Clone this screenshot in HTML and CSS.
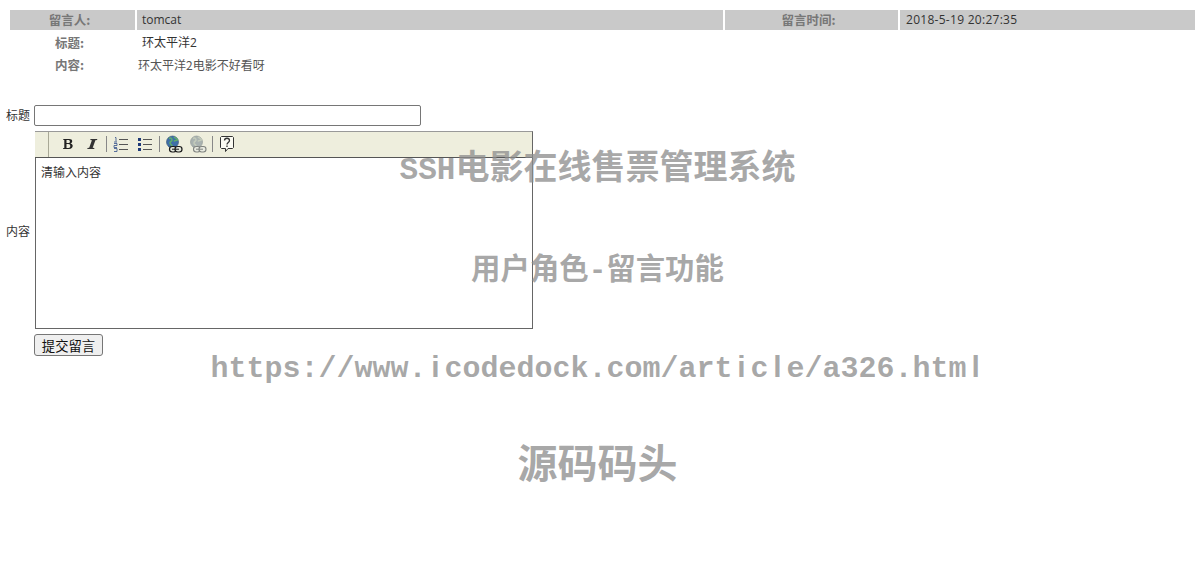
FILE: index.html
```html
<!DOCTYPE html>
<html lang="zh">
<head>
<meta charset="utf-8">
<title>留言</title>
<link rel="stylesheet" href="styles.css">
</head>
<body>
<table class="msg">
  <colgroup><col class="c1"><col class="c2"><col class="c3"><col class="c4"></colgroup>
  <tr class="head">
    <th>留言人:</th><td>tomcat</td><th>留言时间:</th><td class="date">2018-5-19 20:27:35</td>
  </tr>
  <tr>
    <th>标题:</th><td colspan="3">环太平洋2</td>
  </tr>
  <tr class="last">
    <th>内容:</th><td colspan="3" class="body-text">环太平洋2电影不好看呀</td>
  </tr>
</table>
<form class="reply">
  <div class="row title-row">
    <label class="lbl">标题</label>
    <input class="title-input" type="text">
  </div>
  <div class="row content-row">
    <label class="lbl">内容</label>
    <div class="editor">
      <div class="toolbar">
        <span class="grip"></span>
        <svg class="ic ic-b" width="16" height="16" viewBox="0 0 16 16"><path d="M3 3h6.200c2 0 3 .9 3 2.200 0 1.100-.8 1.900-2 2.200 1.500.2 2.500 1.100 2.500 2.400C12.700 11.700 11.400 13 9 13H3v-.8l1.300-.3V3.900L3 3.600zM6.500 3.900v3.200h1.800c1.100 0 1.600-.6 1.600-1.600S9.400 3.900 8.300 3.900zM6.500 8v4h2c1.200 0 1.800-.8 1.800-2S9.600 8 8.400 8z" fill="#222"/></svg>
        <svg class="ic ic-i" width="16" height="16" viewBox="0 0 16 16"><path d="M6.500 3h6.800l-.2 1-1.700.3L8.700 11.700l1.700.3-.2 1H3.300l.2-1 1.700-.3L7.900 4.300 6.300 4z" fill="#333"/></svg>
        <span class="sep"></span>
        <svg class="ic ic-ol" width="16" height="16" viewBox="0 0 16 16"><path d="M6 3.500h9M6 8.500h9M6 13.500h9" stroke="#555" fill="none"/><path d="M2 1.500h1v4M1 6h3M1 7.500h3v2H1v2h3M1 12.500h3v3H1" stroke="#33508c" fill="none" stroke-width=".8"/></svg>
        <svg class="ic ic-ul" width="16" height="16" viewBox="0 0 16 16"><path d="M6 3.500h9M6 8.500h9M6 13.500h9" stroke="#555" fill="none"/><path d="M1 2h3v3H1zM1 7h3v3H1zM1 12h3v3H1z" fill="#1f3a78"/></svg>
        <span class="sep"></span>
        <svg class="ic ic-link" width="18" height="18" viewBox="0 0 18 18"><circle cx="7.500" cy="7" r="6" fill="#3f6fa8" stroke="#2f4f6f" stroke-width=".6"/><path d="M4 3.500c2-1 3 0 3 1.500s-2 1-2 3 2 1 2 3M9 2c1 1 3 1 3.500 3-1.500 1-3 0-3.500 1.500" fill="none" stroke="#5fae6a" stroke-width="1.500"/><g fill="#e4e8dc" stroke="#1a1a1a" stroke-width="1.200"><rect x="4.500" y="11.500" width="7" height="5.500" rx="2.700"/><rect x="10" y="11.500" width="7" height="5.500" rx="2.700"/></g><path d="M7 14.200h7" stroke="#1a1a1a"/></svg>
        <svg class="ic ic-unlink" width="18" height="18" viewBox="0 0 18 18"><circle cx="7.500" cy="7" r="6" fill="#a9b2b0" stroke="#8c9492" stroke-width=".6"/><path d="M4 3.500c2-1 3 0 3 1.500s-2 1-2 3 2 1 2 3M9 2c1 1 3 1 3.500 3-1.500 1-3 0-3.500 1.500" fill="none" stroke="#c3cbbb" stroke-width="1.500"/><g fill="#e8eae0" stroke="#808480" stroke-width="1.100"><rect x="4.500" y="11.500" width="7" height="5.500" rx="2.700"/><rect x="10" y="11.500" width="7" height="5.500" rx="2.700"/></g><path d="M7 14.200h7" stroke="#808480"/></svg>
        <span class="sep sep-last"></span>
        <svg class="ic ic-help" width="16" height="18" viewBox="0 0 16 18"><path d="M2.500 1.500h11l1 1v10l-1 1H9l-2.500 3v-3h-4l-1-1v-10z" fill="#fbfbf3" stroke="#333"/><path d="M5.500 5.500c0-3 5-3 5 0 0 2-2.500 2-2.500 4M8 10.500v1.500" fill="none" stroke="#333" stroke-width="1.300"/></svg>
      </div>
      <div class="area">清输入内容</div>
    </div>
  </div>
  <div class="row submit-row">
    <span class="lbl"></span>
    <button class="submit" type="button">提交留言</button>
  </div>
</form>
<div class="wm wm1"><span class="latin">SSH</span>电影在线售票管理系统</div>
<div class="wm wm2">用户角色-留言功能</div>
<div class="wm wm3">https://www.<span class="bar">i</span>codedock.com/art<span class="bar">i</span>c<span class="bar">l</span>e/a326.htm<span class="bar">l</span></div>
<div class="wm wm4">源码码头</div>
</body>
</html>
```
FILE: styles.css
```css
html, body { margin: 0; padding: 0; background: #fff; }
body {
  position: relative;
  height: 577px;
  overflow: hidden;
  font: 12px "Noto Sans CJK SC", "Liberation Sans", sans-serif;
  color: #333;
}
.msg {
  margin: 8px 0 0 8px;
  width: 1189px;
  border-collapse: separate;
  border-spacing: 2px;
  table-layout: fixed;
}
.c1 { width: 125px; }
.c2 { width: 586px; }
.c3 { width: 173px; }
.msg th, .msg td {
  height: 21px;
  padding: 0;
  font-size: 12px;
  line-height: 21px;
}
.msg th { font-size: 12.5px; font-weight: 700; color: #777; text-align: center; padding-right: 6px; }
.msg td { padding-left: 5px; font-family: "Open Sans", "Noto Sans CJK SC", sans-serif; color: #333; }
.msg td.date { letter-spacing: .28px; padding-left: 6px; }
.msg .head th, .msg .head td { height: 20px; line-height: 20px; background: #c9c9c9; }
.msg .last th, .msg .last td { height: 20px; line-height: 20px; }
.msg td.body-text { padding-left: 1px; color: #555; font-family: "Noto Sans CJK SC", sans-serif; }
.reply { margin-top: 28px; }
.row { display: flex; align-items: center; }
.lbl {
  width: 24px;
  margin: 0 3px 0 6px;
  font-size: 12px;
  color: #333;
  flex: none;
}
.title-row .lbl { padding-bottom: 2px; }
.title-input {
  box-sizing: border-box;
  width: 387px;
  height: 21px;
  margin: 0 0 0 1px;
  padding: 0 2px;
  border: 1px solid #767676;
  border-radius: 2px;
}
.content-row { margin-top: 5px; }
.editor {
  box-sizing: border-box;
  width: 498px;
  height: 198px;
  margin-left: 2px;
  display: flex;
  flex-direction: column;
  border-right: 1px solid #666;
  border-bottom: 1px solid #666;
  border-top: 1px solid #999;
}
.toolbar {
  display: flex;
  align-items: center;
  height: 26px;
  flex: none;
  box-sizing: border-box;
  background: #eeeedd;
  border-bottom: 1px solid #555;
}
.grip { width: 13px; height: 100%; border-right: 1px solid #a8a896; flex: none; }
.ic { display: block; flex: none; margin-bottom: 2px; }
.ic-b { margin-left: 11px; }
.ic-i { margin-left: 8px; }
.sep { width: 1px; height: 16px; background: #888; margin: 0 6px 2px; flex: none; }
.sep-last { margin-right: 6px; margin-left: 5px; }
.ic-ul { margin-left: 8px; }
.ic-link { margin-left: -1px; }
.ic-unlink { margin-left: 6px; }
.area {
  flex: 1;
  border-left: 1px solid #666;
  padding: 5px 5px;
  font-size: 12px;
  line-height: 18px;
  color: #333;
}
.submit-row { margin-top: 5px; }
.submit {
  box-sizing: border-box;
  width: 69px;
  height: 22px;
  margin: 0 0 0 1px;
  padding: 0;
  font: 13.33px "Noto Sans CJK SC", sans-serif;
  color: #111;
  background: #efefef;
  border: 1px solid #767676;
  border-radius: 3px;
}
.wm {
  position: absolute;
  left: 0;
  right: 0;
  text-align: center;
  color: rgba(140, 140, 140, .75);
  font-weight: 700;
  white-space: nowrap;
  font-family: "Liberation Mono", "Noto Sans CJK SC", monospace;
}
.latin { font-size: 31px; }
.bar {
  display: inline-block;
  width: 18px;
  text-align: center;
  font-family: "Liberation Sans", sans-serif;
}
.wm1 { top: 148px; font-size: 34px; line-height: 44px; }
.wm2 { top: 252px; font-size: 29.4px; line-height: 40px; }
.wm3 { top: 347px; font-size: 30px; line-height: 40px; }
.wm4 { top: 441px; font-size: 40px; line-height: 54px; }
```
